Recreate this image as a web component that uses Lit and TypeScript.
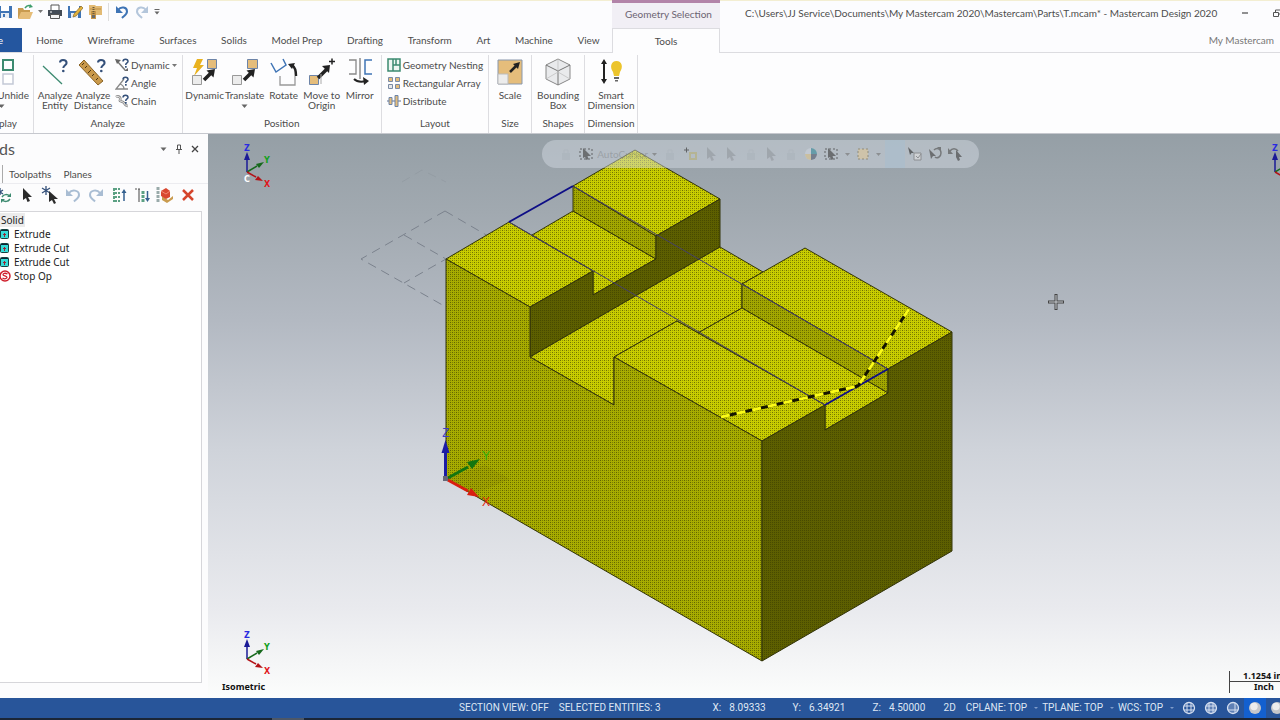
import { LitElement, html, css, svg } from "lit";
import { customElement } from "lit/decorators.js";

const icon = (w: number, h: number, body: unknown) =>
  html`<svg width=${w} height=${h} viewBox="0 0 ${w} ${h}" fill="none" aria-hidden="true">${body}</svg>`;

const question = (x: number, y: number) => svg`
  <g transform="translate(${x} ${y})"><path d="M1 3.500C1 1.500 2.600 1 4 1c2 0 3.600 1 3.600 3S4.300 6.500 4.300 9" stroke="#34507a" stroke-width="2"/>
  <circle cx="4.300" cy="12" r="1.300" fill="#34507a"/></g>`;
const smallQuestion = svg`<path d="M8 3.500C8 2 9 1.200 10.500 1.200S13 2 13 3.500 10.700 5 10.700 7" stroke="#34507a" stroke-width="1.500"/><rect x="10" y="8" width="1.700" height="1.700" fill="#34507a"/>`;
const blackArrow = svg`<path d="M13 22l7-7" stroke="#222" stroke-width="3.500"/><path d="M24 11l-1.500 8.500-7-7z" fill="#222"/>`;
const caret = icon(7, 4, svg`<path d="M0.500 0.500h6L3.500 4z" fill="#666"/>`);
const tinyCaret = icon(5, 3, svg`<path d="M0 0h5L2.500 3z" fill="#777"/>`);

const ic = {
  save: icon(16, 16, svg`<path d="M1 2h14v12H1z" fill="#3f74b5"/><path d="M4 2h8v5H4z" fill="#fff"/><path d="M4 9h8v5H4z" fill="#e8edf4"/><path d="M6 10h2v3H6z" fill="#3f74b5"/>`),
  open: icon(16, 16, svg`<path d="M1 4h5l1 2h6v8H1z" fill="#c99b4f"/><path d="M4 8h12l-3 7H1z" fill="#e6bd78"/><path d="M8 4c2-3 4-3 6-2" stroke="#3d9c6b" stroke-width="1.500"/><path d="M13 0l3 3-4 1z" fill="#3d9c6b"/>`),
  print: icon(16, 16, svg`<path d="M4 1h8v6H4z" fill="#fff" stroke="#555"/><path d="M1 6h14v6H1z" fill="#444c56"/><path d="M3.500 10.500h9v4h-9z" fill="#f4f4f4" stroke="#555"/><path d="M3 8h2" stroke="#fff"/>`),
  saveAs: icon(16, 16, svg`<path d="M1 2h13v12H1z" fill="#3f74b5"/><path d="M3 2h9v5H3z" fill="#fff"/><path d="M4 9h7v5H4z" fill="#e8edf4"/><path d="M6 13l1-3 7-8 2 2-7 8z" fill="#e2b23c" stroke="#8b6a25" stroke-width=".7"/>`),
  zip: icon(16, 16, svg`<path d="M2 1h6l1 1h6v9H2z" fill="#e2ba74"/><path d="M3 5h11" stroke="#bd8d3e"/><path d="M4 7h5v8H4z" fill="#c7964a"/><path d="M6.500 3v9" stroke="#6a5a3a" stroke-dasharray="1 1" stroke-width="2"/><path d="M5 11h3v3H5z" fill="#6a6a6a"/>`),
  undo: icon(14, 14, svg`<path d="M3 5c3-4 9-3 9 1.500 0 3-3 4.500-5 6.500" stroke="#3f74b5" stroke-width="2"/><path d="M1 1v7h7z" fill="#3f74b5"/>`),
  undoOff: icon(16, 16, svg`<path d="M4 6c3-4 10-3 10 2 0 3-3 4.500-5 6.500" stroke="#a9bdd3" stroke-width="2"/><path d="M1 2v7h7z" fill="#a9bdd3"/>`),
  redoOff: icon(16, 16, svg`<path d="M12 6C9 2 2 3 2 8c0 3 3 4.500 5 6.500" stroke="#a9bdd3" stroke-width="2"/><path d="M15 2v7H8z" fill="#a9bdd3"/>`),
  redo: icon(14, 14, svg`<path d="M11 5C8 1 2 2 2 6.500c0 3 3 4.500 5 6.500" stroke="#b4c6db" stroke-width="2"/><path d="M13 1v7H6z" fill="#b4c6db"/>`),
  more: icon(6, 6, svg`<path d="M0.500 .500h5" stroke="#666"/><path d="M.500 2.500h5L3 5.500z" fill="#666"/>`),
  unhide: icon(28, 28, svg`<path d="M2 2h10v10H2zM16 2h10v10H16z" stroke="#3c8a70" stroke-width="2"/><path d="M2 16h10v10H2zM16 16h10v10H16z" fill="#fff" stroke="#c3c9d6" stroke-width="1.500"/>`),
  entity: icon(28, 28, svg`<path d="M2 8l19 18" stroke="#3c8a70" stroke-width="1.300"/>${question(18, 1)}`),
  distance: icon(28, 28, svg`<path d="M5 2l19 21-5 4L0 7z" fill="#c9994b" stroke="#8a6426"/><path d="M5 5l-2 2M8 8l-2 2M12 12l-3 3M15 16l-2 2M19 20l-2 2" stroke="#4b3513"/>${question(18, 1)}`),
  dynSmall: icon(14, 14, svg`<path d="M2 3l8 9" stroke="#777" stroke-width="1.500"/><path d="M0 1l6 1-4 4z" fill="#666"/><path d="M9 13h4v-3z" fill="#666"/>${smallQuestion}`),
  angle: icon(14, 14, svg`<path d="M9 3L1 13h12M5 8c3 1 4 3 4 5" stroke="#888" stroke-width="1.300"/>${smallQuestion}`),
  chain: icon(14, 14, svg`<path d="M1 3c3-2 5 1 4 3s3 1 4 3 2 3 4 3" stroke="#888" stroke-width="2.500"/><path d="M1 3c3-2 5 1 4 3s3 1 4 3 2 3 4 3" stroke="#eee" stroke-width="1"/>${smallQuestion}`),
  dynamic: icon(28, 28, svg`<path d="M6 1h6l-3 6h4L3 18l3-8H2z" fill="#e9b21f"/><path d="M16.500 1.500h9v9h-9z" fill="#e5bd7b" stroke="#6d84a8"/><path d="M1.500 17.500h9v9h-9z" fill="#ececec" stroke="#999"/>${blackArrow}`),
  translate: icon(28, 28, svg`<path d="M16.500 1.500h10v9h-10z" fill="#e5bd7b" stroke="#6d84a8"/><path d="M1.500 17.500h9v9h-9z" fill="#ececec" stroke="#999"/>${blackArrow}`),
  rotate: icon(28, 28, svg`<path d="M1 5l5 9 10-7-3-6" stroke="#3f74b5" stroke-width="1.500"/><path d="M10 18v9h15v-9" stroke="#999" stroke-width="1.300"/><path d="M26 18c0-6-1-9-4-11" stroke="#222" stroke-width="2.500"/><path d="M18 6l7-1-3 6z" fill="#222"/>`),
  move: icon(28, 28, svg`<path d="M1.500 17.500h9v9h-9z" fill="#e5bd7b" stroke="#6d84a8"/><path d="M10 20l9-9" stroke="#222" stroke-width="3.500"/><path d="M22 7l-1 8-7-7z" fill="#222"/><path d="M21 3.500h6M24 .500v6" stroke="#222" stroke-width="1.500"/><path d="M13 26V16" stroke="#aaa"/>`),
  mirror: icon(28, 28, svg`<path d="M3 2h7v14H3" stroke="#888" stroke-width="1.300"/><path d="M14 0v21" stroke="#555"/><path d="M26 2h-7v14h7" stroke="#3f74b5" stroke-width="1.500"/><path d="M8 21c3 3 8 3 12 2" stroke="#222" stroke-width="2"/><path d="M17 19l6 4-5 4z" fill="#222"/>`),
  nesting: icon(14, 14, svg`<path d="M1 1h12v12H1z" fill="#eef6f2" stroke="#3c8a70" stroke-width="1.500"/><path d="M6 1v12M6 7h7M9 1v6" stroke="#3c8a70" stroke-width="1.500"/>`),
  array: icon(14, 14, svg`<g stroke="#7a8ba5" fill="#e5bd7b"><path d="M1.500 1.500h4v4h-4zM8.500 1.500h4v4h-4zM8.500 8.500h4v4h-4z"/><path fill="#e8e8e8" d="M1.500 8.500h4v4h-4z"/></g>`),
  distribute: icon(14, 14, svg`<path d="M0 7h14" stroke="#5b6f8f"/><g stroke="#6d84a8" fill="#e5bd7b"><path d="M2 3.500h3v7H2zM8 1.500h3v11H8z"/></g>`),
  scale: icon(28, 28, svg`<path d="M2 2h24v24H2z" fill="#e5bd7b" stroke="#8897ad"/><path d="M2 16h10v10H2z" fill="#ececec" stroke="#bbb"/><path d="M14 14l7-7" stroke="#222" stroke-width="2.500"/><path d="M24 4l-2 7-5-5z" fill="#222"/>`),
  box: icon(28, 28, svg`<path d="M14 1l12 6v14l-12 6-12-6V7z" fill="#e9eaec" stroke="#888"/><path d="M2 7l12 6 12-6M14 13v14" stroke="#777"/><path d="M14 1v14M2 21l12-7 12 7" stroke="#bbb" stroke-width=".7"/>`),
  smart: icon(28, 28, svg`<path d="M7 4v20" stroke="#222" stroke-width="2"/><path d="M7 1l3 5H4zM7 26l3-5H4z" fill="#222"/><path d="M19.500 3C14 3 12.500 9 16 14l1 4h5l1-4c3.500-5 2-11-3.500-11z" fill="#ecc42c"/><path d="M17 19h5v2h-5zM18 22h3v1.500h-3z" fill="#666"/>`),
  regen: icon(16, 16, svg`<path d="M4 1v7M1 3l6 4M7 3L1 7" stroke="#34507a" stroke-width="1.300"/><path d="M6 10c2-3 5-3 8-1M14 12c-2 3-5 3-8 1" stroke="#3c8a70" stroke-width="1.500"/><path d="M15 6v4h-4zM5 16v-4h4z" fill="#3c8a70"/>`),
  select: icon(16, 16, svg`<path d="M4 1l9 9H9l2 4-2.500 1L7 11l-3 2z" fill="#2b2b2b"/>`),
  selectAll: icon(18, 18, svg`<path d="M5 0v9M1 2l8 5M9 2L1 7" stroke="#34507a" stroke-width="1.300"/><path d="M8 5l9 8h-4l2 4-2 1-2-4-3 2z" fill="#2b2b2b"/>`),
  treeUp: icon(16, 16, svg`<path d="M3 1v14M3 2h6M3 6h6M3 10h6M3 14h6" stroke="#5ba083" stroke-width="2" stroke-dasharray="3 1"/><path d="M13 5v9" stroke="#34608f" stroke-width="1.500"/><path d="M13 2l2.500 4h-5z" fill="#34608f"/>`),
  treeDown: icon(16, 16, svg`<path d="M1 2h6" stroke="#555" stroke-dasharray="2 1"/><path d="M5 2v13" stroke="#444"/><path d="M9 4v11" stroke="#5ba083" stroke-width="3" stroke-dasharray="3 1"/><path d="M13.500 4v8" stroke="#34608f" stroke-width="1.500"/><path d="M13.500 15l2.500-4h-5z" fill="#34608f"/>`),
  solid: icon(18, 18, svg`<path d="M2 1v15" stroke="#9aa" stroke-width="3" stroke-dasharray="3 1"/><path d="M6 10l6 4 5-4v3l-6 4-5-3z" fill="#c99b4f"/><path d="M5 5l5-3 4 3v6l-4 2-5-3z" fill="#d9472f"/><path d="M5 5l5 3 4-3" stroke="#f08a74"/>`),
  remove: icon(14, 14, svg`<path d="M2 2l10 10M12 2L2 12" stroke="#d5452c" stroke-width="2.500"/>`),
  pin: icon(8, 10, svg`<path d="M2.500 1h3v4.500h-3zM1 5.500h6M4 6v4" stroke="#555"/>`),
  close: icon(8, 8, svg`<path d="M1 1l6 6M7 1L1 7" stroke="#444" stroke-width="1.300"/>`),
  extrude: icon(10, 10, svg`<rect x=".500" y=".500" width="8" height="9" rx="1" fill="#35dcd8" stroke="#16413f"/><path d="M1 1.500h7" stroke="#123"/><path d="M4.500 4v4M3 5.500h3" stroke="#9c2230"/>`),
  stop: icon(12, 12, svg`<circle cx="6" cy="6" r="5" fill="#fff" stroke="#cf1f2c" stroke-width="1.500"/><path d="M8.500 4C6 2.500 4 3.500 4 4.700s4 1.200 4 2.600S5.500 9.500 3.500 8" stroke="#cf1f2c" stroke-width="1.300"/>`),
  minimize: icon(8, 8, svg`<path d="M1 4h6" stroke="#555" stroke-width="1.300"/>`),
  restore: icon(8, 8, svg`<path d="M.500 3.500h5v4h-5zM2.500 3V1h5v4H6" stroke="#555"/>`),
  lock: icon(16, 16, svg`<path d="M4 7h8v7H4z" fill="#9097a0"/><path d="M6 7V4h4v3" stroke="#9097a0"/>`),
  marquee: icon(16, 16, svg`<path d="M2 3h12v10H2z" stroke="#333" stroke-dasharray="2 2"/><path d="M5 2l8 8H9.500l1 3-2 1-1.500-3-2 1z" fill="#444"/>`),
  plusSel: icon(16, 16, svg`<path d="M1 4h5M3.500 1.500v5" stroke="#333"/><path d="M7 7h6v6H7z" stroke="#b6b07a" stroke-width="2"/>`),
  globe: icon(16, 16, svg`<circle cx="8" cy="8" r="6" fill="#c9d0da"/><path d="M8 2a6 6 0 016 6l-6 2z" fill="#3c8a9a"/><path d="M14 8a6 6 0 01-6 6v-6z" fill="#555e70"/><path d="M2 8h6v6a6 6 0 01-6-6z" fill="#d6c08d"/>`),
  dottedFill: icon(16, 16, svg`<path d="M3 3h10v10H3z" fill="#dcc79b" stroke="#7c7354" stroke-dasharray="2 2"/>`),
  validate: icon(16, 16, svg`<path d="M1 1l6 6H4.500L3 9z" fill="#333"/><path d="M7 7h7v7H7z" fill="#ddd" stroke="#777"/><path d="M9 10l2 2 3-4" stroke="#777"/>`),
  cycle: icon(16, 16, svg`<path d="M2 3l7 7H6l-2 3z" fill="#444"/><path d="M7 4c3-3 7-1 7 3s-4 6-6 4" stroke="#555" stroke-width="1.500"/><path d="M10 1h4v4z" fill="#555"/>`),
  back: icon(16, 16, svg`<path d="M9 4l6 7h-3l1 3-2 1-2-4z" fill="#444"/><path d="M3 5c2-3 6-3 8 0" stroke="#555" stroke-width="1.500"/><path d="M1 2v6h5z" fill="#555"/>`),
};

const wireGlobe = (k: number) => icon(14, 14, svg`<circle cx="7" cy="7" r="5.500" fill=${k ? "#5f80b5" : "none"} stroke="#d5dff0" stroke-width="1.300"/>
  <path d=${k === 2 ? "M2 9h10M9 2v10" : "M2 5h10M2 9h10M5 2v10M9 2v10"} stroke="#d5dff0"/>`);
const ball = icon(14, 14, svg`<circle cx="7" cy="7" r="6" fill="#c4c6ca"/><circle cx="6" cy="5.500" r="3.700" fill="#ececec"/>`);

const gnomon = (origin: boolean) => html`<svg class="gnomon" width="34" height="46" viewBox="0 0 34 46" aria-hidden="true">
  <path d="M9 30V17" stroke="#1a1a96" stroke-width="1.500"/><path d="M9 10l3 8H6z" fill="#1a1a96"/>
  <path d="M9 30l10-6" stroke="#16691c" stroke-width="1.500"/><path d="M26 20l-5 6-3-4z" fill="#16691c"/>
  <path d="M9 30l9 5" stroke="#b31217" stroke-width="1.500"/><path d="M25 39l-8-1 3-4z" fill="#b31217"/>
  <text x="9" y="9" fill="#2a2ae0">Z</text><text x="29" y="21" fill="#12a11c">Y</text><text x="29" y="45" fill="#e0161b">X</text>
  ${origin ? svg`<text x="9" y="40" fill="#fff">C</text>` : ""}
</svg>`;

@customElement("app-root")
export class AppRoot extends LitElement {
  static styles = css`
    :host { display: block; height: 100vh; overflow: hidden; background: #fdfdfe; color: #4c4c4c; font: 10px/12px Lato, "Open Sans", sans-serif; }
    * { box-sizing: border-box; }
    button { font: inherit; color: inherit; background: none; border: 0; padding: 0; margin: 0; display: flex; align-items: center; justify-content: center; white-space: nowrap; }
    svg { display: block; flex: none; }
    .app { height: 100%; display: grid; grid-template-rows: 53px 81px minmax(0, 1fr) 20px 2px; }
    .head { display: grid; grid-template-columns: auto 108px minmax(0, 1fr); grid-template-rows: 27px 25px; border-top: 1px solid #f3eed2; background: #fcfcfe; }
    .head > * { min-width: 0; }
    .quick { display: flex; align-items: center; margin-left: -5px; padding-bottom: 6px; height: 27px; }
    .quick button { width: 20px; height: 20px; }
    .quick button.thin { width: 10px; }
    .quick i { width: 1px; height: 18px; background: #ddd; margin: 0 3px; }
    .context { background: #f1eff5; border-top: 3px solid #b283a8; margin-top: -1px; display: flex; align-items: center; justify-content: center; padding: 0 0 3px 5px; color: #6c6472; }
    .title { display: flex; align-items: center; padding: 0 11px 3px 25px; gap: 24px; white-space: nowrap; }
    .title h1 { font: inherit; margin: 0 auto 0 0; }
    .tabs { display: flex; width: 612px; border-bottom: 1px solid #dcdce0; }
    .tabs button { flex: 1 1 auto; }
    .tabs .file { flex: none; width: 22px; margin-right: 2px; background: #24569f; color: #fff; justify-content: flex-end; overflow: hidden; padding-right: 19px; }
    .current { border: 1px solid #dcdce0; border-bottom: 0; background: #fdfdfe; }
    .mine { display: flex; justify-content: flex-end; align-items: center; padding-right: 6px; border-bottom: 1px solid #dcdce0; color: #777; }
    .ribbon { display: flex; border-bottom: 1px solid #c6c8ce; background: #fdfdfe; padding-top: 2px; }
    .group { display: flex; flex-direction: column; border-right: 1px solid #dddde1; padding: 3px 2px 1px; }
    .group .body { display: flex; flex: 1; justify-content: center; align-items: flex-start; }
    .group .label { text-align: center; height: 17px; line-height: 16px; white-space: nowrap; }
    .group.clip { width: 34px; overflow: hidden; align-items: flex-end; padding-right: 4px; }
    .group.clip .body { justify-content: flex-end; }
    .group.clip .big { align-items: flex-end; }
    .group.clip svg + span + svg { margin-right: 24px; }
    .group.clip svg:first-child { margin-right: 14px; }
    .group.clip .label { padding-right: 12px; }
    .big { flex-direction: column; width: 38px; justify-content: flex-start; gap: 4px; line-height: 10px; }
    .big.wide { width: 40px; }
    .big.widest { width: 48px; }
    .list { display: flex; flex-direction: column; gap: 4px; padding: 0 3px; }
    .list button { justify-content: flex-start; gap: 2px; height: 14px; }
    .work { display: grid; grid-template-columns: 208px minmax(0, 1fr); min-height: 0; }
    .panel { display: flex; flex-direction: column; min-width: 0; overflow: hidden; background: #fcfcfd; padding-bottom: 15px; }
    .ptitle { display: flex; align-items: center; height: 30px; padding-right: 9px; gap: 8px; }
    .ptitle h2 { font-size: 16px; font-weight: 400; line-height: 20px; margin: 0 auto 0 0; width: 15px; display: flex; justify-content: flex-end; color: #555; }
    .ptabs { display: flex; height: 19px; align-items: center; }
    .ptabs button { padding: 0 6px; }
    .ptabs button.sel { width: 3px; height: 18px; padding: 0; border-right: 1px solid #aaa; }
    .ptools { display: flex; align-items: center; height: 23px; border-top: 1px solid #ececf0; margin-left: -8px; }
    .ptools button { width: 23px; height: 21px; }
    .tree { list-style: none; margin: 5px 6px 0 0; padding: 1px 0; flex: 1; border: 1px solid #d6d6da; border-left: 0; background: #fff; color: #222; font: 10px/14px "Noto Sans", sans-serif; }
    .tree li { display: flex; align-items: center; gap: 4px; height: 14px; }
    .tree .root { background: #ececec; padding: 0 1px; }
    .tree .ico { width: 10px; display: flex; justify-content: center; }
    .view { position: relative; overflow: hidden; background: linear-gradient(#959fa6, #a1a9b0 14%, #b3b9c2 33%, #cfd3da 56%, #e9eaee 84%, #fcfdfc); }
    .model { width: 100%; height: 100%; }
    .model text { font: 12px "Liberation Sans", sans-serif; text-anchor: middle; }
    .gnomon text { font: bold 8px "DejaVu Sans", sans-serif; text-anchor: middle; }
    .corner { position: absolute; left: 30px; }
    .corner.t { top: 8px; }
    .corner.b { bottom: 23px; }
    .corner.r { left: auto; right: -20px; top: 8px; }
    .name { position: absolute; left: 14px; bottom: 5px; color: #111; font: bold 9px/12px "Noto Sans", sans-serif; }
    .ruler { position: absolute; right: 0; bottom: 5px; width: 51px; color: #111; font: bold 9px/10px "Noto Sans", sans-serif; white-space: nowrap; display: grid; grid-template-rows: 10px 12px; }
    .ruler div { padding-left: 13px; border-left: 1px solid #444; }
    .ruler div + div { border-top: 1px solid #444; padding-left: 24px; }
    .bar { position: absolute; left: 334px; top: 6px; width: 437px; height: 28px; border-radius: 14px; background: rgba(215, 222, 230, 0.45); display: flex; align-items: center; padding: 0 14px; overflow: hidden; }
    .bar button { width: 21px; height: 28px; opacity: 0.65; }
    .bar button.faint { opacity: 0.15; }
    .bar button.mode { width: 55px; opacity: 0.25; }
    .bar button.thin { width: 12px; }
    .bar button.on { background: rgba(150, 190, 220, 0.5); opacity: 0.5; }
    .status { display: flex; justify-content: flex-end; align-items: center; background: #28559a; color: #dfe7f4; white-space: nowrap; overflow: hidden; font-family: Roboto, "Open Sans", sans-serif; }
    .status span { margin-right: 10px; }
    .status .coord { width: 65px; margin-right: 15px; display: flex; gap: 8px; }
    .status .coord b { font-weight: 400; }
    .status .lead { margin-right: 52px; }
    .status .last { margin-right: 6px; }
    .status .plane { display: flex; align-items: center; gap: 7px; margin-right: 4px; }
    .status .plane::after { content: ""; border: 2px solid transparent; border-top-color: #7f9cca; border-bottom: 0; }
    .status button { width: 22px; height: 20px; flex: none; }
    .status .sel { background: #1360cf; }
    .status button:last-child { margin-right: -8px; }
    .task { background: #1b2637; padding-left: 272px; }
    .task i { display: block; width: 32px; height: 2px; background: #4d5766; }
  `;

  private big(ico: unknown, lines: string[], cls = "", drop = false) {
    return html`<button class="big ${cls}">${ico}<span>${lines[0]}${lines[1] ? html`<br />${lines[1]}` : ""}</span>${drop ? caret : ""}</button>`;
  }

  private group(label: string, body: unknown, cls = "") {
    return html`<section class="group ${cls}"><div class="body">${body}</div><div class="label">${label}</div></section>`;
  }

  private model() {
    const face = (p: string, c: string, d: string) => svg`<polygon points=${p} fill=${c}/><polygon points=${p} fill="url(#${d})" stroke="#33340a" stroke-width="1"/>`;
    return html`<svg class="model" role="img" aria-label="Isometric part">
      <defs>
        <pattern id="light" width="4" height="4" patternUnits="userSpaceOnUse"><path d="M0 0h1v1H0zM2 2h1v1H2z" fill="#6f7200"/><path d="M2 0h1v1H2zM0 2h1v1H0z" fill="#989c00"/></pattern>
        <pattern id="mid" width="4" height="4" patternUnits="userSpaceOnUse"><path d="M0 0h1v1H0zM2 2h1v1H2z" fill="#626500"/><path d="M2 0h1v1H2zM0 2h1v1H0z" fill="#7c8000"/></pattern>
        <pattern id="dark" width="2" height="2" patternUnits="userSpaceOnUse"><path d="M0 0h1v1H0z" fill="#484a00"/></pattern>
      </defs>
      <g transform="translate(-208 -134)">
        <g stroke="#7b828d" stroke-dasharray="9 6" fill="none">
          <path d="M445 211L361 259l85 48M404 235l42 24-42 24M445 211l43 25"/>
          <path d="M402 182l20-12 24 12" opacity=".25"/>
        </g>
        ${face("573,211 656,259 593,295 593,271 532,235", "#c9cd00", "light")}
        ${face("573,186 656,236 656,259 573,211", "#a3a700", "mid")}
        ${face("573,186 635,150 720,199 656,236", "#c9cd00", "light")}
        ${face("446,259 509,222 593,271 530,307", "#c9cd00", "light")}
        ${face("530,307 593,271 593,295 656,259 656,236 720,199 720,247 530,357", "#5d5f00", "dark")}
        ${face("530,357 720,247 763,272 742,284 742,308 698,333 677,321 614,357 614,405", "#c9cd00", "light")}
        ${face("742,284 805,248 952,332 888,369", "#c9cd00", "light")}
        ${face("742,284 888,369 888,393 742,308", "#a3a700", "mid")}
        ${face("698,333 742,308 888,393 825,430 825,405", "#c9cd00", "light")}
        ${face("614,357 677,321 825,405 762,441", "#c9cd00", "light")}
        ${face("446,259 530,307 530,357 614,405 614,357 762,441 762,661 446,479", "#a8ac00", "mid")}
        ${face("762,441 825,405 825,430 888,393 888,369 952,332 952,551 762,661", "#5d5f00", "dark")}
        <path d="M509 222L825 405M573 186L888 369" stroke="#45406b" fill="none"/>
        <path d="M509 222l64-36M825 405l63-36" stroke="#0e0e86" stroke-width="2"/>
        <g fill="none" stroke-width="3">
          <path d="M721 417l137-31 51-77" stroke="#151500"/>
          <path d="M721 417l137-31 51-77" stroke="#fbfb16" stroke-dasharray="9 7"/>
        </g>
        <path d="M445 479l40-14 25 14-33 14z" fill="#6b6500" opacity=".15"/>
        <path d="M445.500 479v-28" stroke="#1c1ca4" stroke-width="3"/><path d="M445.500 440l4 13h-8z" fill="#1c1ca4"/>
        <path d="M446 479l22-12" stroke="#14750f" stroke-width="3"/><path d="M480 459l-8 10-5-7z" fill="#14750f"/>
        <path d="M446 479l22 12" stroke="#d81e10" stroke-width="3"/><path d="M479 497l-12-2 4-7z" fill="#d81e10"/>
        <path d="M443 476h5v5h-5z" fill="#667"/>
        <text x="446" y="437" fill="#3d3dc4">Z</text><text x="486" y="460" fill="#2fb510">Y</text><text x="486" y="506" fill="#e32410">X</text>
        <path d="M1048 302h16M1056 294v16" stroke="#444" stroke-width="3"/><path d="M1049 302h14M1056 295v14" stroke="#ccd0d5"/>
      </g>
    </svg>`;
  }

  private tool(ico: unknown, label: string, cls = "") {
    return html`<button class=${cls} aria-label=${label}>${ico}</button>`;
  }

  render() {
    const t = this.tool;
    return html`<div class="app">
      <header class="head">
        <div class="quick">
          ${t(ic.save, "Save")}${t(ic.open, "Open")}${t(tinyCaret, "Recent", "thin")}${t(ic.print, "Print")}${t(ic.saveAs, "Save As")}${t(ic.zip, "Zip2Go")}<i></i>${t(ic.undo, "Undo")}${t(ic.redo, "Redo")}${t(ic.more, "Customize", "thin")}
        </div>
        <div class="context">Geometry Selection</div>
        <div class="title"><h1>C:\\Users\\JJ Service\\Documents\\My Mastercam 2020\\Mastercam\\Parts\\T.mcam* - Mastercam Design 2020</h1>${t(ic.minimize, "Minimize")}${t(ic.restore, "Restore")}</div>
        <nav class="tabs">
          <button class="file">File</button>
          ${["Home", "Wireframe", "Surfaces", "Solids", "Model Prep", "Drafting", "Transform", "Art", "Machine", "View"].map((n) => html`<button>${n}</button>`)}
        </nav>
        <button class="current">Tools</button>
        <div class="mine">My Mastercam</div>
      </header>
      <div class="ribbon">
        ${this.group("Display", this.big(ic.unhide, ["Hide/Unhide"], "widest", true), "clip")}
        ${this.group("Analyze", html`${this.big(ic.entity, ["Analyze", "Entity"])}${this.big(ic.distance, ["Analyze", "Distance"])}
          <div class="list"><button>${ic.dynSmall}Dynamic ${tinyCaret}</button><button>${ic.angle}Angle</button><button>${ic.chain}Chain</button></div>`)}
        ${this.group("Position", html`${this.big(ic.dynamic, ["Dynamic"], "wide")}${this.big(ic.translate, ["Translate"], "wide", true)}${this.big(ic.rotate, ["Rotate"])}${this.big(ic.move, ["Move to", "Origin"])}${this.big(ic.mirror, ["Mirror"])}`)}
        ${this.group("Layout", html`<div class="list"><button>${ic.nesting}Geometry Nesting</button><button>${ic.array}Rectangular Array</button><button>${ic.distribute}Distribute</button></div>`)}
        ${this.group("Size", this.big(ic.scale, ["Scale"]))}
        ${this.group("Shapes", this.big(ic.box, ["Bounding", "Box"], "widest"))}
        ${this.group("Dimension", this.big(ic.smart, ["Smart", "Dimension"], "widest"))}
      </div>
      <main class="work">
        <aside class="panel">
          <div class="ptitle"><h2>Solids</h2>${t(caret, "Menu")}${t(ic.pin, "Pin")}${t(ic.close, "Close")}</div>
          <div class="ptabs"><button class="sel" aria-label="Solids"></button><button>Toolpaths</button><button>Planes</button></div>
          <div class="ptools">${t(ic.regen, "Regenerate")}${t(ic.select, "Select")}${t(ic.selectAll, "Select all")}${t(ic.undoOff, "Undo")}${t(ic.redoOff, "Redo")}${t(ic.treeUp, "Collapse")}${t(ic.treeDown, "Expand")}${t(ic.solid, "Solid")}${t(ic.remove, "Delete")}</div>
          <ul class="tree">
            <li><span class="root">Solid</span></li>
            ${["Extrude", "Extrude Cut", "Extrude Cut"].map((n) => html`<li><span class="ico">${ic.extrude}</span>${n}</li>`)}
            <li><span class="ico">${ic.stop}</span>Stop Op</li>
          </ul>
        </aside>
        <section class="view">
          ${this.model()}
          <div class="bar">
            ${t(ic.lock, "Lock", "faint")}${t(ic.marquee, "AutoCursor")}<button class="mode">AutoCursor</button>${t(tinyCaret, "Cursor modes", "thin")}
            ${t(ic.lock, "Fast point", "faint")}${t(ic.plusSel, "Add")}${t(ic.select, "Pick", "faint")}${t(ic.select, "Edges", "faint")}${t(ic.lock, "Faces", "faint")}${t(ic.select, "Bodies", "faint")}${t(ic.lock, "Features", "faint")}
            ${t(ic.globe, "Planes")}${t(ic.marquee, "Window")}${t(tinyCaret, "Window modes", "thin")}${t(ic.dottedFill, "Inside")}${t(tinyCaret, "Inside modes", "thin")}
            ${t("", "Active", "on")}${t(ic.validate, "Verify")}${t(ic.cycle, "Invert")}${t(ic.back, "Last")}
          </div>
          <div class="corner t">${gnomon(true)}</div>
          <div class="corner r">${gnomon(false)}</div>
          <div class="corner b">${gnomon(false)}</div>
          <div class="name">Isometric</div>
          <div class="ruler"><div>1.1254 in</div><div>Inch</div></div>
        </section>
      </main>
      <footer class="status">
        <span>SECTION VIEW: OFF</span><span class="lead">SELECTED ENTITIES: 3</span>
        <span class="coord"><b>X:</b>8.09333</span><span class="coord"><b>Y:</b>6.34921</span><span class="coord last"><b>Z:</b>4.50000</span>
        <span>2D</span><span class="plane">CPLANE: TOP</span><span class="plane">TPLANE: TOP</span><span class="plane">WCS: TOP</span>
        ${t(wireGlobe(0), "Wireframe")}${t(wireGlobe(1), "Dimmed")}${t(wireGlobe(2), "No hidden")}${t(ball, "Outline shaded", "sel")}${t(ball, "Shaded")}
      </footer>
      <div class="task"><i></i></div>
    </div>`;
  }
}
